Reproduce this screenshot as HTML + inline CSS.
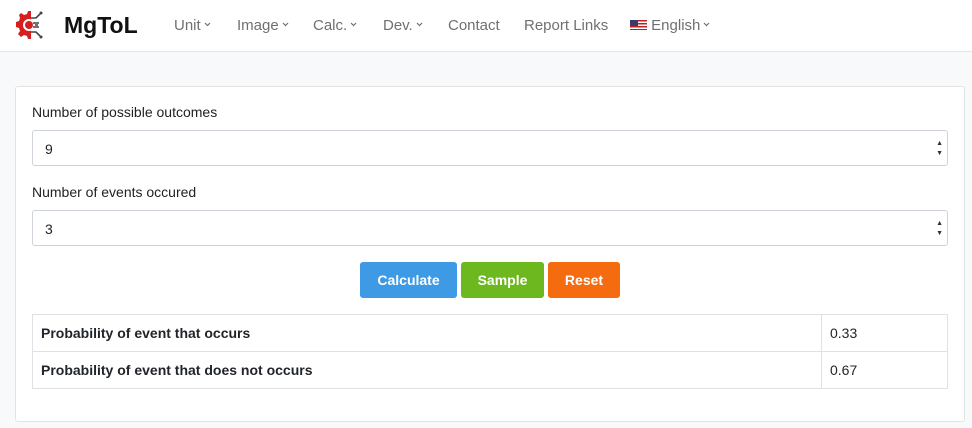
<!DOCTYPE html>
<html><head><style>
*{box-sizing:border-box;margin:0;padding:0}
body{width:972px;height:428px;background:#f8f9fa;font-family:"Liberation Sans",sans-serif;font-size:14px;color:#212529;overflow:hidden;position:relative}
.nav{position:absolute;top:0;left:0;width:972px;height:52px;background:#fff;border-bottom:1px solid #e5e5e5}
.logo{position:absolute;left:64px;top:12px;font-size:23px;font-weight:bold;color:#111}
.ni{position:absolute;top:17px;font-size:15px;color:#707070}
.ch{display:inline-block;width:7px;height:7px;margin-left:3px;vertical-align:2px}
.card{position:absolute;left:15px;top:86px;width:950px;height:336px;background:#fff;border:1px solid #e3e3e3;border-radius:3px}
.lbl{position:absolute;left:16px;font-size:14px;color:#222}
.inp{position:absolute;left:16px;width:916px;height:36px;border:1px solid #ced4da;border-radius:3px;padding:10px 12px;font-size:14px}
.sp{position:absolute;right:4px;top:8px;font-size:7px;line-height:10px;color:#333}
.btn{position:absolute;top:175px;height:36px;border-radius:3px;color:#fff;font-weight:bold;font-size:14px;text-align:center;line-height:36px}
table{position:absolute;left:16px;top:227px;width:916px;border-collapse:collapse}
td{border:1px solid #dee2e6;height:37px;padding:0 8px;font-size:14px}
</style></head><body>
<div class="nav">
<svg style="position:absolute;left:14px;top:8px" width="34" height="34" viewBox="0 0 34 34">
<path d="M17 3 L14 3 L13 6 L10 7 L7 5 L5 7 L6 10 L5 13 L2 14 L2 19 L5 20 L6 23 L4 26 L7 29 L10 27 L13 28 L14 31 L17 31 Z" fill="#d62020"/>
<circle cx="15" cy="17" r="6" fill="#fff"/><circle cx="15" cy="17" r="4" fill="#d62020"/>
<path d="M17 10h5l4-4M19 15h6M19 19h6M17 24h5l4 4M21 17h3" stroke="#444" stroke-width="1.6" fill="none"/>
<circle cx="27" cy="5" r="1.5" fill="#444"/><circle cx="27" cy="29" r="1.5" fill="#444"/>
</svg>
<div class="logo">MgToL</div>
<div class="ni" style="left:174px">Unit<svg class="ch" viewBox="0 0 7 7"><path d="M1 2l2.5 2.5L6 2" stroke="#707070" fill="none" stroke-width="1.2"/></svg></div>
<div class="ni" style="left:237px">Image<svg class="ch" viewBox="0 0 7 7"><path d="M1 2l2.5 2.5L6 2" stroke="#707070" fill="none" stroke-width="1.2"/></svg></div>
<div class="ni" style="left:313px">Calc.<svg class="ch" viewBox="0 0 7 7"><path d="M1 2l2.5 2.5L6 2" stroke="#707070" fill="none" stroke-width="1.2"/></svg></div>
<div class="ni" style="left:383px">Dev.<svg class="ch" viewBox="0 0 7 7"><path d="M1 2l2.5 2.5L6 2" stroke="#707070" fill="none" stroke-width="1.2"/></svg></div>
<div class="ni" style="left:448px">Contact</div>
<div class="ni" style="left:524px">Report Links</div>
<div class="ni" style="left:630px"><span style="display:inline-block;width:17px;height:10px;background:repeating-linear-gradient(#b22 0 1.5px,#fff 1.5px 3px);position:relative;vertical-align:0"><span style="position:absolute;left:0;top:0;width:8px;height:6px;background:#3c3b6e"></span></span> English<svg class="ch" viewBox="0 0 7 7"><path d="M1 2l2.5 2.5L6 2" stroke="#707070" fill="none" stroke-width="1.2"/></svg></div>
</div>
<div class="card">
<div class="lbl" style="top:17px">Number of possible outcomes</div>
<div class="inp" style="top:43px">9<div class="sp">▲<br>▼</div></div>
<div class="lbl" style="top:97px">Number of events occured</div>
<div class="inp" style="top:123px">3<div class="sp">▲<br>▼</div></div>
<div class="btn" style="left:344px;width:97px;background:#3f9ae5">Calculate</div>
<div class="btn" style="left:445px;width:83px;background:#6db81f">Sample</div>
<div class="btn" style="left:532px;width:72px;background:#f56b0f">Reset</div>
<table><tr><td style="font-weight:bold;width:789px">Probability of event that occurs</td><td>0.33</td></tr>
<tr><td style="font-weight:bold">Probability of event that does not occurs</td><td>0.67</td></tr></table>
</div>
</body></html>
